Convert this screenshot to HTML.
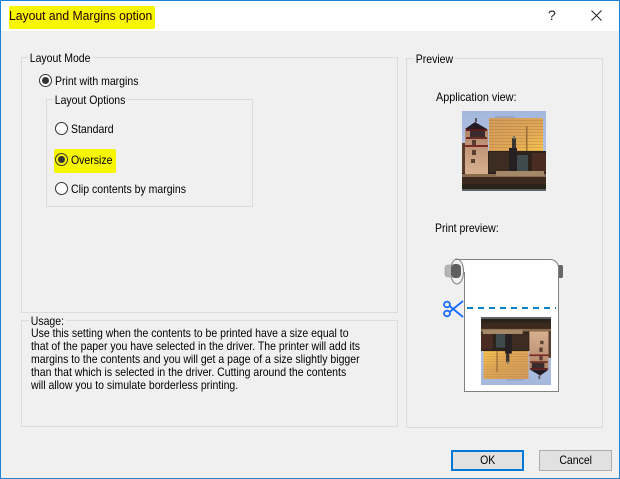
<!DOCTYPE html>
<html><head><meta charset="utf-8"><style>
html,body{margin:0;padding:0}
body{width:620px;height:479px;overflow:hidden;position:relative;background:#f0f0f0;font-family:"Liberation Sans",sans-serif;font-size:12px;color:#000}
div{position:absolute;box-sizing:border-box}
.t{white-space:nowrap;line-height:14px;transform:scaleX(.875);transform-origin:0 0}
.g{border:1px solid #dcdcdc}
.l{background:#f0f0f0;padding:0 2px;white-space:nowrap;line-height:14px;transform:scaleX(.875);transform-origin:0 0}
.r{width:13px;height:13px;border:1px solid #333;border-radius:50%;background:#fff}
.r.c:after{content:"";position:absolute;left:2px;top:2px;width:7px;height:7px;border-radius:50%;background:#333}
.b span{display:inline-block;transform:scaleX(.875)}
</style></head><body>
<div style="left:0;top:0;width:620px;height:31px;background:#fff"></div>
<div style="left:0;top:0;width:620px;height:479px;border:1px solid #1883d7"></div>
<div style="left:9px;top:6px;width:146px;height:23px;background:#f6f600;border-radius:2px"></div>
<div class="t" style="left:9px;top:9px;font-size:13px;color:#200;transform:scaleX(.935)">Layout and Margins option</div>
<div class="t" style="left:548px;top:8px;font-size:14px;color:#222;transform:none">?</div>
<svg style="position:absolute;left:590px;top:9px" width="14" height="14"><path d="M1.500 1.500L11.500 11.500M11.500 1.500L1.500 11.500" stroke="#222" fill="none"/></svg>

<div class="g" style="left:21px;top:57px;width:377px;height:256px"></div>
<div class="l" style="left:28px;top:51px">Layout Mode</div>
<div class="r c" style="left:39px;top:74px"></div>
<div class="t" style="left:55px;top:74px">Print with margins</div>
<div class="g" style="left:46px;top:99px;width:207px;height:108px"></div>
<div class="l" style="left:53px;top:93px">Layout Options</div>
<div class="r" style="left:55px;top:122px"></div>
<div class="t" style="left:71px;top:122px">Standard</div>
<div style="left:54px;top:149px;width:62px;height:24px;background:#f6f600;border-radius:2px"></div>
<div class="r c" style="left:55px;top:153px;background:#f6f600"></div>
<div class="t" style="left:71px;top:153px">Oversize</div>
<div class="r" style="left:55px;top:182px"></div>
<div class="t" style="left:71px;top:182px">Clip contents by margins</div>

<div class="g" style="left:21px;top:320px;width:377px;height:107px"></div>
<div class="l" style="left:29px;top:314px">Usage:</div>
<div class="t" style="left:31px;top:327px;line-height:13px">Use this setting when the contents to be printed have a size equal to<br>that of the paper you have selected in the driver. The printer will add its<br>margins to the contents and you will get a page of a size slightly bigger<br>than that which is selected in the driver. Cutting around the contents<br>will allow you to simulate borderless printing.</div>

<div class="g" style="left:406px;top:58px;width:197px;height:370px"></div>
<div class="l" style="left:414px;top:52px">Preview</div>
<div class="t" style="left:436px;top:90px;transform:scaleX(.9)">Application view:</div>
<div class="t" style="left:435px;top:221px">Print preview:</div>

<svg style="position:absolute;left:0;top:0" width="620" height="479">
<defs>
<linearGradient id="sky" x1="0" y1="0" x2="0" y2="1"><stop offset="0" stop-color="#a3b8de"/><stop offset="1" stop-color="#c4cbe0"/></linearGradient>
<linearGradient id="gold" x1="0" y1="0" x2="1" y2="1"><stop offset="0" stop-color="#d09a5c"/><stop offset=".6" stop-color="#e0a858"/><stop offset="1" stop-color="#fcc850"/></linearGradient>
<linearGradient id="tower" x1="0" y1="0" x2="0" y2="1"><stop offset="0" stop-color="#b08468"/><stop offset="1" stop-color="#d8b090"/></linearGradient>
<pattern id="fl" width="4" height="3" patternUnits="userSpaceOnUse"><rect width="4" height="1" fill="#a06a30" opacity=".3"/></pattern>
<g id="ph">
<rect width="84" height="80" fill="url(#sky)"/>
<rect x="27" y="7" width="54" height="34" fill="url(#gold)"/>
<rect x="27" y="7" width="54" height="34" fill="url(#fl)"/>
<rect x="64" y="15" width="1.500" height="26" fill="#9a6c38"/>
<rect x="33" y="5" width="20" height="2" fill="#9aa6c8"/>
<path d="M0 40H84V64H0Z" fill="#2e221c"/>
<rect x="27" y="41" width="20" height="20" fill="#3c2c22"/>
<rect x="47" y="37" width="8" height="24" fill="#262022"/>
<rect x="50" y="27" width="4" height="10" fill="#3a3430"/>
<rect x="51" y="25" width="2" height="3" fill="#6a7a70"/>
<rect x="55" y="44" width="11" height="18" fill="#3e4a4c"/>
<rect x="70" y="42" width="14" height="20" fill="#4a2c22"/>
<rect x="0" y="32" width="4" height="30" fill="#5a3c2c"/>
<rect x="3" y="18" width="23" height="45" fill="url(#tower)"/>
<path d="M3 18L13 11L25 18Z" fill="#241c24"/>
<rect x="13" y="7" width="2" height="4" fill="#555"/>
<rect x="4" y="18" width="21" height="2" fill="#5a1c1c"/>
<rect x="8" y="20" width="15" height="6" fill="#3a2c2c"/>
<rect x="4" y="26" width="21" height="2" fill="#6a2c24"/>
<rect x="10" y="29" width="4" height="5" fill="#5a3c30"/>
<rect x="3" y="34" width="23" height="2" fill="#7a2c28"/>
<rect x="10" y="39" width="4" height="5" fill="#5a3c30"/>
<rect x="9" y="48" width="4" height="4" fill="#5a4030"/>
<rect x="0" y="63" width="84" height="4" fill="#8a6c4c"/>
<rect x="34" y="60" width="48" height="5" fill="#a58868"/>
<rect x="0" y="66" width="84" height="7" fill="#3c2a1e"/>
<rect x="0" y="73" width="84" height="5" fill="#2a2418"/>
<rect x="0" y="78" width="84" height="2" fill="#5a6468"/>
</g>
</defs>
<use href="#ph" x="462" y="111"/>

<rect x="558" y="265" width="5" height="13" rx="1.500" fill="#686868"/>
<path d="M464.500 391.500V272C464.500 262 460 259.500 456 259.500H550C555 259.500 558.500 263 558.500 268V391.500Z" fill="#fff"/>
<ellipse cx="457" cy="271.500" rx="6.500" ry="12.500" fill="#f0f0f0" stroke="#808080"/>
<rect x="445" y="265" width="9" height="12" rx="3" fill="#b4b4b4" stroke="#999" stroke-width=".6"/>
<rect x="451" y="264" width="10" height="14" rx="4" fill="#5f5f5f"/>
<path d="M455 259.500H550C555 259.500 558.500 263 558.500 268V392M464.500 272V391.500H558.500" fill="none" stroke="#808080"/>
<path d="M463 308H556" stroke="#0a84c8" stroke-width="2" stroke-dasharray="6 5" stroke-dashoffset="-4" fill="none"/>
<g fill="none" stroke="#1a6bff" stroke-width="1.800">
<ellipse cx="447" cy="304.500" rx="3" ry="2.800"/><ellipse cx="447" cy="313.500" rx="3" ry="2.800"/>
<path d="M449.500 306L463 317M449.500 312L463 301"/>
</g>
<use href="#ph" transform="translate(551 385) rotate(180) scale(.833 .85)"/>
</svg>

<div class="b" style="left:451px;top:450px;width:73px;height:21px;border:2px solid #0078d7;background:#e1e1e1;text-align:center;line-height:17px"><span>OK</span></div>
<div class="b" style="left:539px;top:450px;width:73px;height:21px;border:1px solid #adadad;background:#e1e1e1;text-align:center;line-height:19px"><span>Cancel</span></div>
</body></html>
